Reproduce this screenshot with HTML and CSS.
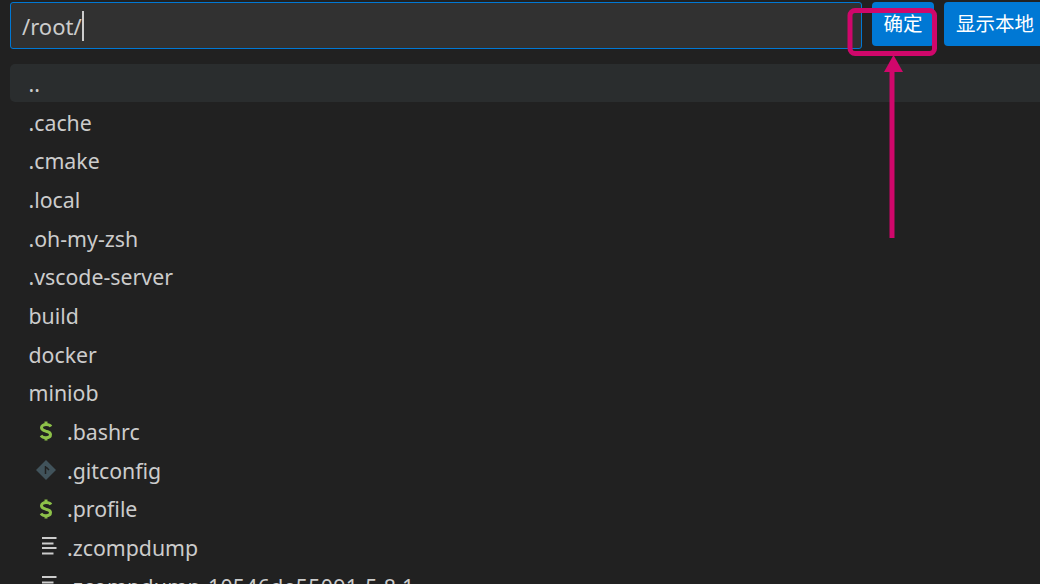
FILE: index.html
```html
<!DOCTYPE html>
<html lang="zh">
<head>
<meta charset="utf-8">
<title>Open folder</title>
<link rel="stylesheet" href="styles.css">
</head>
<body>
<div class="dialog">
  <div class="top">
    <div class="input"><span>/root/</span><i class="caret"></i></div>
    <button class="btn ok">确定</button>
    <button class="btn local">显示本地</button>
  </div>
  <ul class="list">
    <li class="row active"><span class="name">..</span></li>
    <li class="row"><span class="name">.cache</span></li>
    <li class="row"><span class="name">.cmake</span></li>
    <li class="row"><span class="name">.local</span></li>
    <li class="row"><span class="name">.oh-my-zsh</span></li>
    <li class="row"><span class="name">.vscode-server</span></li>
    <li class="row"><span class="name">build</span></li>
    <li class="row"><span class="name">docker</span></li>
    <li class="row"><span class="name">miniob</span></li>
    <li class="row file"><svg class="icon" viewBox="0 0 24 24"><path class="dollar" d="M17 7.500C16 6 14 5.500 12 5.500 9.500 5.500 7.500 6.800 7.500 8.800 7.500 11 9.500 11.500 12 12.200 14.500 12.800 16.500 13.400 16.500 15.500 16.500 17.500 14.500 18.700 12 18.700 10 18.700 8 18 7 16.500M12 2.500v3M12 18.500v3"/></svg><span class="name">.bashrc</span></li>
    <li class="row file"><svg class="icon" viewBox="0 0 24 24"><path class="git" d="M12 2 22 12 12 22 2 12Z"/><path class="gitline" d="M11.500 8v8M11.500 8.500l3.500 3.500"/></svg><span class="name">.gitconfig</span></li>
    <li class="row file"><svg class="icon" viewBox="0 0 24 24"><path class="dollar" d="M17 7.500C16 6 14 5.500 12 5.500 9.500 5.500 7.500 6.800 7.500 8.800 7.500 11 9.500 11.500 12 12.200 14.500 12.800 16.500 13.400 16.500 15.500 16.500 17.500 14.500 18.700 12 18.700 10 18.700 8 18 7 16.500M12 2.500v3M12 18.500v3"/></svg><span class="name">.profile</span></li>
    <li class="row file"><svg class="icon" viewBox="0 0 24 24"><path class="lines" d="M8 3h14.500M8 8.500h11.500M8 13h14.500M8 18.500h11.500"/></svg><span class="name">.zcompdump</span></li>
    <li class="row file"><svg class="icon" viewBox="0 0 24 24"><path class="lines" d="M8 3h14.500M8 8.500h11.500M8 13h14.500M8 18.500h11.500"/></svg><span class="name long">.zcompdump-10546de55091-5.8.1</span></li>
  </ul>
</div>
<svg class="mark" viewBox="0 0 1040 584" aria-hidden="true">
  <rect class="box" x="850" y="10.500" width="84.500" height="43" rx="5"/>
  <path class="shaft" d="M892 238V70"/>
  <path class="head" d="M893.500 55 884 72H903Z"/>
</svg>
</body>
</html>
```
FILE: styles.css
```css
* { box-sizing: border-box; }
html, body { margin: 0; height: 100%; }
body {
  position: relative;
  width: 1040px;
  height: 584px;
  overflow: hidden;
  background: #212121;
  color: #cccccc;
  font-family: "Noto Sans", "Noto Sans CJK SC", sans-serif;
}
.dialog { padding: 2px 0 0 10px; width: 1060px; }
.top { display: flex; align-items: flex-start; }
.input {
  width: 852px;
  height: 47px;
  flex: none;
  display: flex;
  align-items: center;
  padding-left: 11px;
  background: #313131;
  border: 1px solid #0078d4;
  border-radius: 3px;
  font-size: 22px;
  color: #cccccc;
}
.caret { display: block; width: 2px; height: 30px; background: #cccccc; }
.btn {
  flex: none;
  height: 44px;
  border: 0;
  border-radius: 4px;
  background: #0078d4;
  color: #ffffff;
  font-family: "Noto Sans CJK SC", sans-serif;
  font-size: 19.500px;
  padding: 0 0 4px;
}
.ok { width: 62px; margin-left: 10px; }
.local { width: 110px; margin-left: 10px; padding-left: 12px; text-align: left; }
.list { list-style: none; margin: 14.500px 0 0; padding: 0; }
.row {
  height: 38.670px;
  display: flex;
  align-items: center;
  padding: 1.500px 0 0 18.500px;
  font-size: 21.300px;
  white-space: nowrap;
}
.active { background: #2a2d2e; border-radius: 5px; }
.file { padding-left: 24px; }
.icon { width: 24px; height: 24px; flex: none; margin-right: 9px; }
.long { letter-spacing: 0.270px; }
.dollar { fill: none; stroke: #8dc149; stroke-width: 3; }
.git { fill: #41535b; }
.gitline { fill: none; stroke: #212121; stroke-width: 1.500; }
.lines { fill: none; stroke: #cccccc; stroke-width: 2; }
.mark { position: absolute; left: 0; top: 0; width: 1040px; height: 584px; pointer-events: none; }
.box { fill: none; stroke: #d0076b; stroke-width: 5; }
.shaft { fill: none; stroke: #d0076b; stroke-width: 5; }
.head { fill: #d0076b; }
```
